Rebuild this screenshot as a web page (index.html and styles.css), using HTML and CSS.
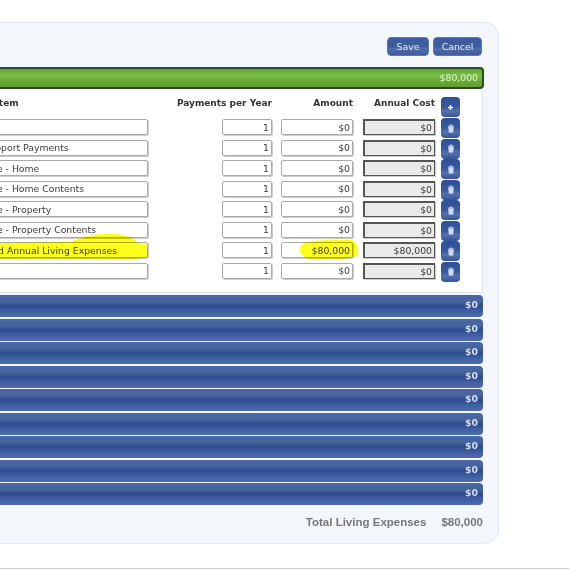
FILE: index.html
```html
<!DOCTYPE html>
<html lang="en">
<head>
    <meta charset="UTF-8">
    <title>Living Expenses</title>
    <link rel="stylesheet" href="styles.css">
</head>
<body>
    <div class="page">
        <div class="panel">
            <div class="actions">
                <button class="btn">Save</button>
                <button class="btn">Cancel</button>
            </div>
            <div class="bar-green"><span>$80,000</span></div>
            <div class="table">
                <div class="head">
                    <div class="h-item">Expense Item</div>
                    <div class="h-pay">Payments per Year</div>
                    <div class="h-amt">Amount</div>
                    <div class="h-cost">Annual Cost</div>
                    <div class="icon-btn plus">
                        <svg width="9" height="9" viewBox="0 0 9 9"><path d="M4.5 2v5M2 4.5h5" stroke="#e8eefa" stroke-width="1.6"/></svg>
                    </div>
                </div>
                <div class="row">
                    <input class="c-item" value="">
                    <input class="c-pay" value="1">
                    <input class="c-amt" value="$0">
                    <input class="c-cost" value="$0">
                    <div class="icon-btn"><svg width="8" height="9" viewBox="0 0 9 10"><path d="M1 2.2h7M3.3 2V1h2.4v1M1.8 3h5.4L6.7 9.2H2.3z" fill="#cfdaf0" stroke="#cfdaf0" stroke-width=".7"/></svg></div>
                </div>
                <div class="row">
                    <input class="c-item" value="Child Support Payments">
                    <input class="c-pay" value="1">
                    <input class="c-amt" value="$0">
                    <input class="c-cost" value="$0">
                    <div class="icon-btn"><svg width="8" height="9" viewBox="0 0 9 10"><path d="M1 2.2h7M3.3 2V1h2.4v1M1.8 3h5.4L6.7 9.2H2.3z" fill="#cfdaf0" stroke="#cfdaf0" stroke-width=".7"/></svg></div>
                </div>
                <div class="row">
                    <input class="c-item" value="Insurance - Home">
                    <input class="c-pay" value="1">
                    <input class="c-amt" value="$0">
                    <input class="c-cost" value="$0">
                    <div class="icon-btn"><svg width="8" height="9" viewBox="0 0 9 10"><path d="M1 2.2h7M3.3 2V1h2.4v1M1.8 3h5.4L6.7 9.2H2.3z" fill="#cfdaf0" stroke="#cfdaf0" stroke-width=".7"/></svg></div>
                </div>
                <div class="row">
                    <input class="c-item" value="Insurance - Home Contents">
                    <input class="c-pay" value="1">
                    <input class="c-amt" value="$0">
                    <input class="c-cost" value="$0">
                    <div class="icon-btn"><svg width="8" height="9" viewBox="0 0 9 10"><path d="M1 2.2h7M3.3 2V1h2.4v1M1.8 3h5.4L6.7 9.2H2.3z" fill="#cfdaf0" stroke="#cfdaf0" stroke-width=".7"/></svg></div>
                </div>
                <div class="row">
                    <input class="c-item" value="Insurance - Property">
                    <input class="c-pay" value="1">
                    <input class="c-amt" value="$0">
                    <input class="c-cost" value="$0">
                    <div class="icon-btn"><svg width="8" height="9" viewBox="0 0 9 10"><path d="M1 2.2h7M3.3 2V1h2.4v1M1.8 3h5.4L6.7 9.2H2.3z" fill="#cfdaf0" stroke="#cfdaf0" stroke-width=".7"/></svg></div>
                </div>
                <div class="row">
                    <input class="c-item" value="Insurance - Property Contents">
                    <input class="c-pay" value="1">
                    <input class="c-amt" value="$0">
                    <input class="c-cost" value="$0">
                    <div class="icon-btn"><svg width="8" height="9" viewBox="0 0 9 10"><path d="M1 2.2h7M3.3 2V1h2.4v1M1.8 3h5.4L6.7 9.2H2.3z" fill="#cfdaf0" stroke="#cfdaf0" stroke-width=".7"/></svg></div>
                </div>
                <div class="row">
                    <input class="c-item" value="Estimated Annual Living Expenses">
                    <input class="c-pay" value="1">
                    <input class="c-amt" value="$80,000">
                    <input class="c-cost" value="$80,000">
                    <div class="icon-btn"><svg width="8" height="9" viewBox="0 0 9 10"><path d="M1 2.2h7M3.3 2V1h2.4v1M1.8 3h5.4L6.7 9.2H2.3z" fill="#cfdaf0" stroke="#cfdaf0" stroke-width=".7"/></svg></div>
                </div>
                <div class="row">
                    <input class="c-item" value="">
                    <input class="c-pay" value="1">
                    <input class="c-amt" value="$0">
                    <input class="c-cost" value="$0">
                    <div class="icon-btn"><svg width="8" height="9" viewBox="0 0 9 10"><path d="M1 2.2h7M3.3 2V1h2.4v1M1.8 3h5.4L6.7 9.2H2.3z" fill="#cfdaf0" stroke="#cfdaf0" stroke-width=".7"/></svg></div>
                </div>
            </div>
            <div class="bars">
                <div class="bar-blue">$0</div>
                <div class="bar-blue">$0</div>
                <div class="bar-blue">$0</div>
                <div class="bar-blue">$0</div>
                <div class="bar-blue">$0</div>
                <div class="bar-blue">$0</div>
                <div class="bar-blue">$0</div>
                <div class="bar-blue">$0</div>
                <div class="bar-blue">$0</div>
            </div>
            <div class="total">
                <span>Total Living Expenses</span>
                <span>$80,000</span>
            </div>
        </div>
        <div class="rule"></div>
        <!-- marker pen over the form -->
        <svg class="marker" width="569" height="569" viewBox="0 0 569 569">
            <path d="M0 243L70 242Q92 232 118 234Q134 237 138 243L147 244L148 257L130 260L0 259z" fill="#ffff1e"/>
            <path d="M304 243Q318 239 352 240Q359 243 358 256Q340 261 308 259Q298 254 300 247z" fill="#ffff1e"/>
        </svg>
    </div>
</body>
</html>
```

FILE: styles.css
```css
*{
    margin: 0;
    padding: 0;
    box-sizing: border-box;
}
html, body{
    width: 569px;
    height: 569px;
    overflow: hidden;
    background: #fff;
}
body{
    font-family: "DejaVu Sans", sans-serif;
    font-size: 9.3px;
    color: #333;
}
.page{
    position: relative;
    width: 569px;
    height: 569px;
    overflow: hidden;
    padding-top: 22px;
    filter: blur(.4px);
}
.panel{
    width: 569px;
    height: 522px;
    margin-left: -70px;
    padding: 14px 15px 0 0;
    background: #f3f7fc;
    border: 1px solid #dfe8f3;
    border-radius: 14px;
}
.actions{
    display: flex;
    justify-content: flex-end;
    gap: 4px;
    height: 30px;
    padding-right: 1px;
}
.btn{
    height: 19px;
    padding: 0 7px;
    font: 9.3px "DejaVu Sans", sans-serif;
    color: #e6ecf8;
    background: linear-gradient(#3f5c9f, #3d5ba0 50%, #4f6cab 62%, #3f5c9f);
    border: 1px solid #5c76ae;
    border-radius: 4px;
}
.actions .btn:first-child{
    width: 42px;
}
.actions .btn:last-child{
    width: 49px;
}
.bar-green{
    height: 22px;
    margin-right: -1px;
    padding-right: 4px;
    line-height: 18px;
    text-align: right;
    color: #e4f2d6;
    background: linear-gradient(#5fa532, #7cbd49 35%, #6bae38 60%, #5c9f2e);
    border: 2px solid #2f4a1c;
    border-width: 2px 2px 2px 0;
    border-radius: 0 4px 4px 0;
}
.table{
    height: 204px;
    background: #fff;
    border: 1px solid #dde6f2;
    border-width: 0 1px 1px 0;
}
.head{
    display: flex;
    height: 28px;
    font-weight: bold;
    font-size: 9px;
    color: #333;
    text-align: right;
    padding-left: 22px;
}
.head > div{
    flex-shrink: 0;
    padding-top: 9px;
}
.h-item{
    width: 95px;
    text-align: left;
    margin-left: -3px;
    margin-right: 117px;
}
.h-pay{
    width: 110px;
    margin-right: 9px;
}
.h-amt{
    width: 72px;
    margin-right: 10px;
}
.h-cost{
    width: 72px;
    margin-right: 6px;
}
.head .icon-btn{
    margin-top: 8px;
    padding-top: 0;
}
.row{
    display: flex;
    align-items: flex-start;
    height: 20.5px;
    padding-left: 22px;
}
.row input{
    flex-shrink: 0;
    height: 16px;
    margin-top: 2px;
    padding: 0 2px;
    font: 9.3px "DejaVu Sans", sans-serif;
    color: #3c3c3c;
    background: #fff;
    border: 1px solid #aaa;
    box-shadow: 1px 1px 0 #ccc;
    border-radius: 2px;
    text-align: right;
}
.row .c-item{
    width: 195px;
    margin-right: 74px;
    padding-left: 3px;
    text-align: left;
}
.row .c-pay{
    width: 50px;
    margin-right: 9px;
}
.row .c-amt{
    width: 72px;
    margin-right: 10px;
}
.row .c-cost{
    width: 72px;
    margin-right: 6px;
    background: #eaeaea;
    border: 2px solid #555;
    border-width: 2px 1px 1px 2px;
    border-radius: 0;
}
.icon-btn{
    display: flex;
    flex-shrink: 0;
    align-items: center;
    justify-content: center;
    width: 19px;
    height: 20px;
    margin-top: 1px;
    background: linear-gradient(#2f4f96, #3a5a9e 50%, #5571ad 70%, #34549a);
    border-radius: 4px;
}
.bars{
    margin-top: 2px;
}
.bar-blue{
    height: 22px;
    margin-bottom: 1.5px;
    padding-right: 5px;
    line-height: 20px;
    font-weight: bold;
    text-align: right;
    color: #d5def0;
    background: linear-gradient(#4a67a9, #466399 30%, #2c4a8e 50%, #3e5ca2 70%, #4f6cad);
    border-radius: 0 4px 4px 0;
}
.total{
    display: flex;
    justify-content: flex-end;
    gap: 15px;
    padding-top: 9px;
    font: bold 11.5px "Liberation Sans", sans-serif;
    color: #777;
}
.rule{
    height: 1px;
    margin-top: 24px;
    background: #ccc;
}
.marker{
    position: absolute;
    top: 0;
    left: 0;
    mix-blend-mode: multiply;
}
```
